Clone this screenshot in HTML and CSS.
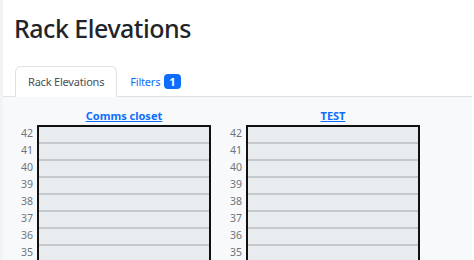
FILE: index.html
```html
<!DOCTYPE html>
<html lang="en">
<head>
    <meta charset="UTF-8">
    <title>Rack Elevations</title>
    <link rel="stylesheet" href="styles.css">
</head>
<body>
    <div class="page">
        <h1 class="page-title">Rack Elevations</h1>

        <!-- Tabs -->
        <ul class="nav-tabs">
            <li class="tab active">Rack Elevations</li>
            <li class="tab">Filters <span class="badge">1</span></li>
        </ul>

        <div class="tab-panel">
            <div class="racks">
                <div class="rack">
                    <a class="rack-name" href="#">Comms closet</a>
                    <div class="rack-body">
                        <ul class="unit-labels">
                            <li>42</li><li>41</li><li>40</li><li>39</li>
                            <li>38</li><li>37</li><li>36</li><li>35</li>
                        </ul>
                        <div class="rack-frame">
                            <div class="unit"></div><div class="unit"></div>
                            <div class="unit"></div><div class="unit"></div>
                            <div class="unit"></div><div class="unit"></div>
                            <div class="unit"></div><div class="unit"></div>
                        </div>
                    </div>
                </div>

                <div class="rack">
                    <a class="rack-name" href="#">TEST</a>
                    <div class="rack-body">
                        <ul class="unit-labels">
                            <li>42</li><li>41</li><li>40</li><li>39</li>
                            <li>38</li><li>37</li><li>36</li><li>35</li>
                        </ul>
                        <div class="rack-frame">
                            <div class="unit"></div><div class="unit"></div>
                            <div class="unit"></div><div class="unit"></div>
                            <div class="unit"></div><div class="unit"></div>
                            <div class="unit"></div><div class="unit"></div>
                        </div>
                    </div>
                </div>
            </div>
        </div>
    </div>
</body>
</html>
```

FILE: styles.css
```css
body {
    margin: 0;
    background: #fff;
    font-family: "Noto Sans", "Open Sans", sans-serif;
    color: #212529;
    overflow: hidden;
}

.page {
    height: 260px;
    border-left: 3px solid #f1f3f5;
}

.page-title {
    margin: 0;
    padding: 11px 0 0 11px;
    height: 66px;
    box-sizing: border-box;
    font-size: 25px;
    font-weight: 500;
    color: #212529;
    letter-spacing: -0.5px;
}

.nav-tabs {
    list-style: none;
    margin: 0;
    padding: 0 0 0 12px;
    display: flex;
    border-bottom: 1px solid #dee2e6;
    width: 469px;
    box-sizing: border-box;
}

.tab {
    height: 29px;
    padding: 0 12px;
    display: flex;
    align-items: center;
    gap: 4px;
    font-size: 11px;
    letter-spacing: -0.2px;
    color: #0d6efd;
    border: 1px solid transparent;
    border-radius: 6px 6px 0 0;
    margin-bottom: -1px;
}

.tab.active {
    color: #495057;
    background: #fff;
    border-color: #dee2e6 #dee2e6 #fff;
}

.badge {
    background: #0d6efd;
    color: #fff;
    font-size: 11px;
    font-weight: 700;
    letter-spacing: 0;
    border-radius: 4px;
    padding: 0 5px;
    line-height: 15px;
}

.tab-panel {
    background: #f8f9fa;
    width: 469px;
    height: 164px;
    padding: 12px 0 0 14px;
    box-sizing: border-box;
}

.racks {
    display: flex;
    gap: 15px;
}

.rack {
    display: flex;
    flex-direction: column;
}

.rack-name {
    align-self: flex-end;
    width: 174px;
    text-align: center;
    height: 16px;
    line-height: 14px;
    font-size: 11px;
    font-weight: 700;
    color: #0d6efd;
}

.rack-body {
    display: flex;
    gap: 4px;
}

.unit-labels {
    list-style: none;
    margin: 0;
    padding: 0;
    width: 16px;
}

.unit-labels li {
    height: 17px;
    line-height: 17px;
    text-align: right;
    font-size: 10.5px;
    color: #6c757d;
}

.rack-frame {
    width: 174px;
    box-sizing: border-box;
    border: 2px solid #111;
    border-bottom: none;
    background: #e9ecef;
}

.unit {
    height: 15px;
    border-bottom: 2px solid #c6c9cc;
}
```
